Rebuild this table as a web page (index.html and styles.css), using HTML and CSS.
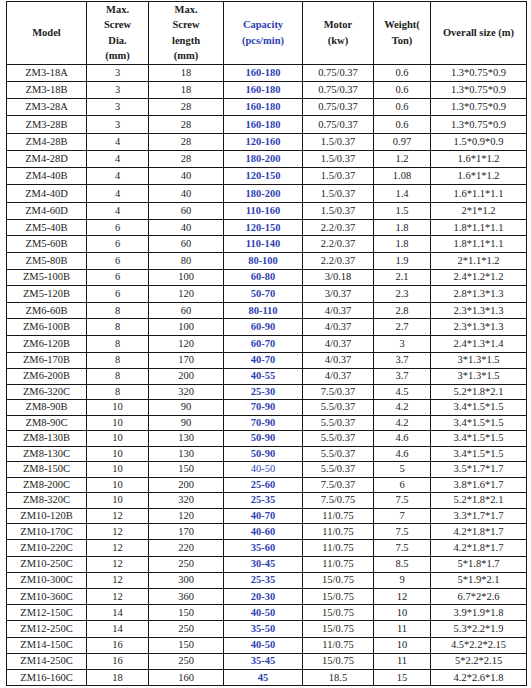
FILE: index.html
```html
<!DOCTYPE html>
<html lang="en">
<head>
<meta charset="utf-8">
<title>Specifications</title>
<link rel="stylesheet" href="styles.css">
</head>
<body>
<table class="spec">
  <colgroup>
    <col class="c-model"><col class="c-dia"><col class="c-len"><col class="c-cap"><col class="c-motor"><col class="c-weight"><col class="c-size">
  </colgroup>
  <thead>
    <tr class="head">
      <th>Model</th>
      <th>Max.<br>Screw<br>Dia.<br>(mm)</th>
      <th>Max.<br>Screw<br>length<br>(mm)</th>
      <th class="cap">Capacity<br>(pcs/min)</th>
      <th>Motor<br>(kw)</th>
      <th>Weight(<br>Ton)</th>
      <th>Overall size (m)</th>
    </tr>
  </thead>
  <tbody>
    <tr class="ga"><td>ZM3-18A</td><td>3</td><td>18</td><td class="cap">160-180</td><td>0.75/0.37</td><td>0.6</td><td>1.3*0.75*0.9</td></tr>
    <tr class="ga"><td>ZM3-18B</td><td>3</td><td>18</td><td class="cap">160-180</td><td>0.75/0.37</td><td>0.6</td><td>1.3*0.75*0.9</td></tr>
    <tr class="ga"><td>ZM3-28A</td><td>3</td><td>28</td><td class="cap">160-180</td><td>0.75/0.37</td><td>0.6</td><td>1.3*0.75*0.9</td></tr>
    <tr class="ga"><td>ZM3-28B</td><td>3</td><td>28</td><td class="cap">160-180</td><td>0.75/0.37</td><td>0.6</td><td>1.3*0.75*0.9</td></tr>
    <tr class="ga"><td>ZM4-28B</td><td>4</td><td>28</td><td class="cap">120-160</td><td>1.5/0.37</td><td>0.97</td><td>1.5*0.9*0.9</td></tr>
    <tr class="ga"><td>ZM4-28D</td><td>4</td><td>28</td><td class="cap">180-200</td><td>1.5/0.37</td><td>1.2</td><td>1.6*1*1.2</td></tr>
    <tr class="ga"><td>ZM4-40B</td><td>4</td><td>40</td><td class="cap">120-150</td><td>1.5/0.37</td><td>1.08</td><td>1.6*1*1.2</td></tr>
    <tr class="ga"><td>ZM4-40D</td><td>4</td><td>40</td><td class="cap">180-200</td><td>1.5/0.37</td><td>1.4</td><td>1.6*1.1*1.1</td></tr>
    <tr class="ga"><td>ZM4-60D</td><td>4</td><td>60</td><td class="cap">110-160</td><td>1.5/0.37</td><td>1.5</td><td>2*1*1.2</td></tr>
    <tr class="gb"><td>ZM5-40B</td><td>6</td><td>40</td><td class="cap">120-150</td><td>2.2/0.37</td><td>1.8</td><td>1.8*1.1*1.1</td></tr>
    <tr class="gb"><td>ZM5-60B</td><td>6</td><td>60</td><td class="cap">110-140</td><td>2.2/0.37</td><td>1.8</td><td>1.8*1.1*1.1</td></tr>
    <tr class="gb"><td>ZM5-80B</td><td>6</td><td>80</td><td class="cap">80-100</td><td>2.2/0.37</td><td>1.9</td><td>2*1.1*1.2</td></tr>
    <tr class="gb"><td>ZM5-100B</td><td>6</td><td>100</td><td class="cap">60-80</td><td>3/0.18</td><td>2.1</td><td>2.4*1.2*1.2</td></tr>
    <tr class="gb"><td>ZM5-120B</td><td>6</td><td>120</td><td class="cap">50-70</td><td>3/0.37</td><td>2.3</td><td>2.8*1.3*1.3</td></tr>
    <tr class="gb"><td>ZM6-60B</td><td>8</td><td>60</td><td class="cap">80-110</td><td>4/0.37</td><td>2.8</td><td>2.3*1.3*1.3</td></tr>
    <tr class="gb"><td>ZM6-100B</td><td>8</td><td>100</td><td class="cap">60-90</td><td>4/0.37</td><td>2.7</td><td>2.3*1.3*1.3</td></tr>
    <tr class="gb"><td>ZM6-120B</td><td>8</td><td>120</td><td class="cap">60-70</td><td>4/0.37</td><td>3</td><td>2.4*1.3*1.4</td></tr>
    <tr class="gb"><td>ZM6-170B</td><td>8</td><td>170</td><td class="cap">40-70</td><td>4/0.37</td><td>3.7</td><td>3*1.3*1.5</td></tr>
    <tr class="gc"><td>ZM6-200B</td><td>8</td><td>200</td><td class="cap">40-55</td><td>4/0.37</td><td>3.7</td><td>3*1.3*1.5</td></tr>
    <tr class="gc"><td>ZM6-320C</td><td>8</td><td>320</td><td class="cap">25-30</td><td>7.5/0.37</td><td>4.5</td><td>5.2*1.8*2.1</td></tr>
    <tr class="gc"><td>ZM8-90B</td><td>10</td><td>90</td><td class="cap">70-90</td><td>5.5/0.37</td><td>4.2</td><td>3.4*1.5*1.5</td></tr>
    <tr class="gc"><td>ZM8-90C</td><td>10</td><td>90</td><td class="cap">70-90</td><td>5.5/0.37</td><td>4.2</td><td>3.4*1.5*1.5</td></tr>
    <tr class="gc"><td>ZM8-130B</td><td>10</td><td>130</td><td class="cap">50-90</td><td>5.5/0.37</td><td>4.6</td><td>3.4*1.5*1.5</td></tr>
    <tr class="gc"><td>ZM8-130C</td><td>10</td><td>130</td><td class="cap">50-90</td><td>5.5/0.37</td><td>4.6</td><td>3.4*1.5*1.5</td></tr>
    <tr class="gc"><td>ZM8-150C</td><td>10</td><td>150</td><td class="cap light">40-50</td><td>5.5/0.37</td><td>5</td><td>3.5*1.7*1.7</td></tr>
    <tr class="gc"><td>ZM8-200C</td><td>10</td><td>200</td><td class="cap">25-60</td><td>7.5/0.37</td><td>6</td><td>3.8*1.6*1.7</td></tr>
    <tr class="gc"><td>ZM8-320C</td><td>10</td><td>320</td><td class="cap">25-35</td><td>7.5/0.75</td><td>7.5</td><td>5.2*1.8*2.1</td></tr>
    <tr class="gc"><td>ZM10-120B</td><td>12</td><td>120</td><td class="cap">40-70</td><td>11/0.75</td><td>7</td><td>3.3*1.7*1.7</td></tr>
    <tr class="gd"><td>ZM10-170C</td><td>12</td><td>170</td><td class="cap">40-60</td><td>11/0.75</td><td>7.5</td><td>4.2*1.8*1.7</td></tr>
    <tr class="gd"><td>ZM10-220C</td><td>12</td><td>220</td><td class="cap">35-60</td><td>11/0.75</td><td>7.5</td><td>4.2*1.8*1.7</td></tr>
    <tr class="gd"><td>ZM10-250C</td><td>12</td><td>250</td><td class="cap">30-45</td><td>11/0.75</td><td>8.5</td><td>5*1.8*1.7</td></tr>
    <tr class="gd"><td>ZM10-300C</td><td>12</td><td>300</td><td class="cap">25-35</td><td>15/0.75</td><td>9</td><td>5*1.9*2.1</td></tr>
    <tr class="gd"><td>ZM10-360C</td><td>12</td><td>360</td><td class="cap">20-30</td><td>15/0.75</td><td>12</td><td>6.7*2*2.6</td></tr>
    <tr class="gd"><td>ZM12-150C</td><td>14</td><td>150</td><td class="cap">40-50</td><td>15/0.75</td><td>10</td><td>3.9*1.9*1.8</td></tr>
    <tr class="gd"><td>ZM12-250C</td><td>14</td><td>250</td><td class="cap">35-50</td><td>15/0.75</td><td>11</td><td>5.3*2.2*1.9</td></tr>
    <tr class="gd"><td>ZM14-150C</td><td>16</td><td>150</td><td class="cap">40-50</td><td>11/0.75</td><td>10</td><td>4.5*2.2*2.15</td></tr>
    <tr class="gd"><td>ZM14-250C</td><td>16</td><td>250</td><td class="cap">35-45</td><td>15/0.75</td><td>11</td><td>5*2.2*2.15</td></tr>
    <tr class="gd"><td>ZM16-160C</td><td>18</td><td>160</td><td class="cap">45</td><td>18.5</td><td>15</td><td>4.2*2.6*1.8</td></tr>
  </tbody>
</table>
</body>
</html>
```

FILE: styles.css
```css
html, body {
  margin: 0;
  background: #ffffff;
}
body {
  padding: 1px 5px 0 6px;
  font-family: "Liberation Serif", "Times New Roman", serif;
  color: #1c1c1c;
}
.spec {
  border-collapse: collapse;
  table-layout: fixed;
  width: 520px;
  font-size: 10.5px;
}
.c-model { width: 80px; }
.c-dia { width: 62px; }
.c-len { width: 75px; }
.c-cap { width: 79px; }
.c-motor { width: 71px; }
.c-weight { width: 57px; }
.c-size { width: 96px; }
.spec th,
.spec td {
  border: 1px solid #161616;
  padding: 0;
  text-align: center;
  vertical-align: middle;
  overflow: hidden;
  white-space: nowrap;
}
.spec th {
  font-weight: bold;
  line-height: 15.4px;
}
.spec td {
  line-height: 12px;
}
.head th { height: 61px; }
.ga td { height: 16.25px; }
.gb td { height: 15.6px; }
.gc td { height: 14.5px; }
.gd td { height: 15.2px; }
.spec .cap {
  color: #2f3fb4;
  font-weight: bold;
}
.spec .light {
  font-weight: normal;
}
```
